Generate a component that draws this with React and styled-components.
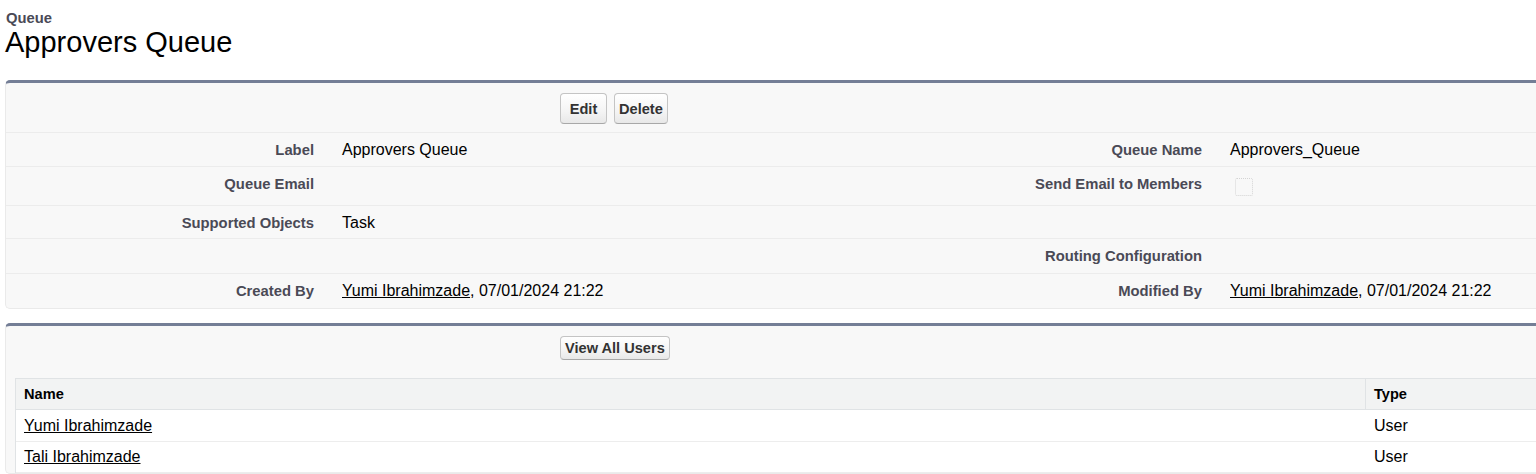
import React from 'react';
import styled, { createGlobalStyle } from 'styled-components';

const GlobalStyle = createGlobalStyle`
  html, body {
    margin: 0;
    padding: 0;
    background: #fff;
    overflow: hidden;
  }
  body {
    font-family: "Liberation Sans", Arial, Helvetica, sans-serif;
    color: #000;
  }
`;

const details = [
  { h: 34, left: ['Label', 'Approvers Queue'], right: ['Queue Name', 'Approvers_Queue'] },
  { h: 39, left: ['Queue Email', ''], right: ['Send Email to Members', 'checkbox'] },
  { h: 33, left: ['Supported Objects', 'Task'], right: ['', ''] },
  { h: 35, left: ['', ''], right: ['Routing Configuration', ''] },
  { h: 34, left: ['Created By', 'user'], right: ['Modified By', 'user'] },
];

const members = [
  { name: 'Yumi Ibrahimzade', type: 'User', h: 32 },
  { name: 'Tali Ibrahimzade', type: 'User', h: 31 },
];

const renderValue = (value) => {
  if (value === 'checkbox') return <Checkbox />;
  if (value === 'user')
    return (
      <>
        <UserLink href="#">Yumi Ibrahimzade</UserLink>, 07/01/2024 21:22
      </>
    );
  return value;
};

const App = () => {
  return (
    <Page>
      <GlobalStyle />
      <TypeLabel>Queue</TypeLabel>
      <Title>Approvers Queue</Title>

      <Panel>
        <ButtonBar $height={50} $divider>
          <Button $height={31} $minWidth={47}>Edit</Button>
          <Button $height={31}>Delete</Button>
        </ButtonBar>
        {details.map((row, i) => (
          <DetailRow key={i} $height={row.h} $last={i === details.length - 1}>
            <LabelCell>{row.left[0]}</LabelCell>
            <DataCell>{renderValue(row.left[1])}</DataCell>
            <LabelCell>{row.right[0]}</LabelCell>
            <DataCell>{renderValue(row.right[1])}</DataCell>
          </DetailRow>
        ))}
      </Panel>

      <Panel $gap={14}>
        <ButtonBar $height={52}>
          <Button $height={24}>View All Users</Button>
        </ButtonBar>
        <ListTable>
          <HeaderRow>
            <HeadCell>Name</HeadCell>
            <HeadCell $divider>Type</HeadCell>
          </HeaderRow>
          {members.map((m) => (
            <ListRow key={m.name} $height={m.h}>
              <ListCell>
                <UserLink href="#">{m.name}</UserLink>
              </ListCell>
              <ListCell $type>{m.type}</ListCell>
            </ListRow>
          ))}
        </ListTable>
      </Panel>
    </Page>
  );
};

export default App;

const Page = styled.div`
  padding: 11px 0 0 5px;
`;

const TypeLabel = styled.div`
  font-size: 14.8px;
  line-height: 14px;
  font-weight: bold;
  color: #4a4a56;
  padding-left: 1px;
`;

const Title = styled.h1`
  margin: 3px 0 24px;
  font-size: 29px;
  line-height: 28px;
  font-weight: normal;
  color: #000;
`;

const Panel = styled.div`
  margin-top: ${(p) => p.$gap || 0}px;
  background: #f8f8f8;
  border: 1px solid #eaeaea;
  border-right: none;
  border-top: 3px solid #747e96;
  border-radius: 5px 0 0 5px;
`;

const ButtonBar = styled.div`
  display: flex;
  align-items: flex-start;
  gap: 7px;
  box-sizing: border-box;
  height: ${(p) => p.$height}px;
  padding: 10px 0 0 554px;
  border-bottom: ${(p) => (p.$divider ? '1px solid #ececec' : 'none')};
`;

const Button = styled.button`
  box-sizing: border-box;
  height: ${(p) => p.$height}px;
  min-width: ${(p) => p.$minWidth || 0}px;
  padding: 0 4px;
  font-family: inherit;
  font-size: 14.6px;
  font-weight: bold;
  color: #333;
  background: linear-gradient(#ffffff, #f4f4f4 60%, #e8e8e8);
  border: 1px solid #c4c4c4;
  border-bottom-color: #a8a8a8;
  border-radius: 4px;
  cursor: pointer;
`;

const DetailRow = styled.div`
  display: grid;
  grid-template-columns: 320px 568px 320px 1fr;
  box-sizing: border-box;
  height: ${(p) => p.$height}px;
  border-bottom: ${(p) => (p.$last ? 'none' : '1px solid #ececec')};
`;

const LabelCell = styled.div`
  padding: 8px 12px 0 0;
  text-align: right;
  font-size: 14.8px;
  line-height: 18px;
  font-weight: bold;
  color: #4a4a56;
  white-space: nowrap;
`;

const DataCell = styled.div`
  padding: 8px 0 0 16px;
  font-size: 16px;
  line-height: 18px;
  color: #000;
  white-space: nowrap;
`;

const Checkbox = styled.span`
  display: block;
  width: 18px;
  height: 18px;
  box-sizing: border-box;
  margin: 3px 0 0 5px;
  border: 1px dotted #d4d4d4;
  border-radius: 2px;
  background: #f8f8f8;
`;

const UserLink = styled.a`
  color: #000;
  text-decoration: underline;
`;

const ListTable = styled.div`
  margin-left: 9px;
  border: 1px solid #e0e3e5;
  border-right: none;
  border-bottom: none;
  background: #fff;
`;

const HeaderRow = styled.div`
  display: grid;
  grid-template-columns: 1349px 1fr;
  height: 31px;
  box-sizing: border-box;
  background: #f2f3f3;
  border-bottom: 1px solid #e0e3e5;
`;

const HeadCell = styled.div`
  display: flex;
  align-items: center;
  padding-left: 8px;
  border-left: ${(p) => (p.$divider ? '1px solid #e0e3e5' : 'none')};
  font-size: 14.6px;
  font-weight: bold;
  color: #000;
`;

const ListRow = styled.div`
  display: grid;
  grid-template-columns: 1349px 1fr;
  box-sizing: border-box;
  height: ${(p) => p.$height}px;
  border-bottom: 1px solid #ededed;
`;

const ListCell = styled.div`
  display: flex;
  align-items: center;
  padding-left: ${(p) => (p.$type ? 9 : 8)}px;
  font-size: 16px;
  color: #000;
`;
